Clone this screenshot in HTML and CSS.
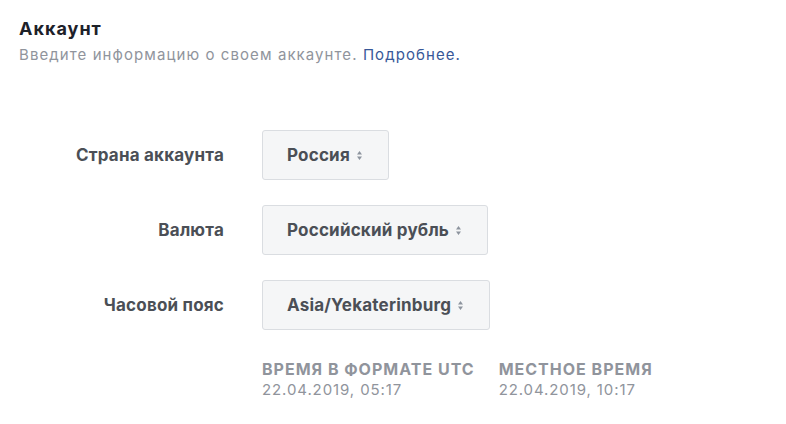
FILE: index.html
```html
<!DOCTYPE html>
<html lang="ru">
<head>
<meta charset="utf-8">
<link rel="stylesheet" href="styles.css">
</head>
<body>
<div class="page">
  <div class="header">
    <div class="title">Аккаунт</div>
    <div class="subtitle">Введите информацию о своем аккаунте. <a class="link" href="#">Подробнее.</a></div>
  </div>
  <div class="form">
    <div class="row">
      <div class="label">Страна аккаунта</div>
      <div class="select"><span>Россия</span><svg class="arrows" width="5" height="9" viewBox="0 0 5 9"><path d="M2.5 0L5 3.6H0Z M2.5 9L5 5.4H0Z" fill="#8d949e"/></svg></div>
    </div>
    <div class="row">
      <div class="label">Валюта</div>
      <div class="select"><span>Российский рубль</span><svg class="arrows" width="5" height="9" viewBox="0 0 5 9"><path d="M2.5 0L5 3.6H0Z M2.5 9L5 5.4H0Z" fill="#8d949e"/></svg></div>
    </div>
    <div class="row">
      <div class="label">Часовой пояс</div>
      <div class="select"><span>Asia/Yekaterinburg</span><svg class="arrows" width="5" height="9" viewBox="0 0 5 9"><path d="M2.5 0L5 3.6H0Z M2.5 9L5 5.4H0Z" fill="#8d949e"/></svg></div>
    </div>
    <div class="times">
      <div class="time">
        <div class="time-head">ВРЕМЯ В ФОРМАТЕ UTC</div>
        <div class="time-val">22.04.2019, 05:17</div>
      </div>
      <div class="time">
        <div class="time-head">МЕСТНОЕ ВРЕМЯ</div>
        <div class="time-val">22.04.2019, 10:17</div>
      </div>
    </div>
  </div>
</div>
</body>
</html>
```
FILE: styles.css
```css
* { box-sizing: border-box; }
html, body { margin: 0; padding: 0; background: #fff; }
body { font-family: "Inter", "Liberation Sans", sans-serif; color: #4b4f56; }
.page { padding: 18px 19px; }
.title { font-size: 18px; font-weight: bold; color: #1d2129; line-height: 22px; letter-spacing: 1px; }
.subtitle { font-size: 15px; color: #90949c; line-height: 20px; margin-top: 5px; letter-spacing: 1.08px; }
.link { color: #385898; text-decoration: none; }
.form { margin-top: 65px; display: flex; flex-direction: column; gap: 25px; }
.row { display: flex; align-items: center; }
.label { width: 205px; text-align: right; font-size: 17px; font-weight: bold; color: #4b4f56; margin-right: 38px; line-height: 22px; letter-spacing: 0.2px; }
.select { height: 50px; display: flex; align-items: center; gap: 7px; padding: 0 26px 0 24px; background: #f5f6f7; border: 1px solid #dadde1; border-radius: 3px; font-size: 17px; font-weight: bold; color: #4b4f56; letter-spacing: 0.2px; }
.arrows { display: block; }
.times { display: flex; gap: 24px; margin-left: 243px; margin-top: 4px; }
.time-head { font-size: 16px; font-weight: bold; color: #90949c; line-height: 20px; letter-spacing: 1px; }
.time-val { font-size: 15px; color: #90949c; line-height: 22px; letter-spacing: 0.9px; }
```
